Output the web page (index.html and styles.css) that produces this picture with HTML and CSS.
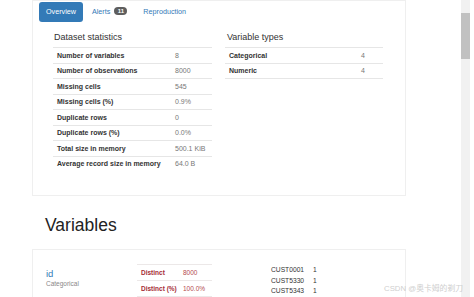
FILE: index.html
```html
<!DOCTYPE html>
<html lang="en">
<head>
  <meta charset="UTF-8">
  <meta name="viewport" content="width=device-width, initial-scale=1.0">
  <title>Profiling Report</title>
  <link rel="stylesheet" href="styles.css">
</head>
<body>

<div class="page">
  <div class="content">

    <!-- Overview -->
    <div class="panel overview">
      <ul class="tabs">
        <li><a class="active" href="#">Overview</a></li>
        <li><a href="#">Alerts <span class="badge">11</span></a></li>
        <li><a href="#">Reproduction</a></li>
      </ul>

      <div class="stats">
        <div class="col">
          <h2>Dataset statistics</h2>
          <table class="info-table ds">
            <tr><th>Number of variables</th><td>8</td></tr>
            <tr><th>Number of observations</th><td>8000</td></tr>
            <tr><th>Missing cells</th><td>545</td></tr>
            <tr><th>Missing cells (%)</th><td>0.9%</td></tr>
            <tr><th>Duplicate rows</th><td>0</td></tr>
            <tr><th>Duplicate rows (%)</th><td>0.0%</td></tr>
            <tr><th>Total size in memory</th><td>500.1 KiB</td></tr>
            <tr><th>Average record size in memory</th><td>64.0 B</td></tr>
          </table>
        </div>
        <div class="col">
          <h2 class="types-title">Variable types</h2>
          <table class="info-table vt">
            <tr><th>Categorical</th><td>4</td></tr>
            <tr><th>Numeric</th><td>4</td></tr>
          </table>
        </div>
      </div>
    </div>

    <h1 class="section-title">Variables</h1>

    <!-- Variable: id -->
    <div class="panel variable">
      <div class="var-name">
        <a href="#">id</a>
        <small>Categorical</small>
      </div>
      <table class="alert-table">
        <tr><th>Distinct</th><td>8000</td></tr>
        <tr><th>Distinct (%)</th><td>100.0%</td></tr>
      </table>
      <ul class="freq">
        <li><span>CUST0001</span><span>1</span></li>
        <li><span>CUST5330</span><span>1</span></li>
        <li><span>CUST5343</span><span>1</span></li>
      </ul>
    </div>

  </div>

  <div class="scrollbar"><div class="thumb"></div></div>
</div>

<div class="watermark">CSDN @奥卡姆的剃刀</div>

</body>
</html>
```

FILE: styles.css
```css
* {
  margin: 0;
  padding: 0;
  box-sizing: border-box;
}
body {
  font-family: "Liberation Sans", Arial, "Noto Sans CJK SC", sans-serif;
  background: #fff;
  color: #333;
  height: 297px;
  overflow: hidden;
  position: relative;
}
a {
  color: #337ab7;
  text-decoration: none;
}
.page {
  display: flex;
  height: 297px;
}
.content {
  width: 461px;
}
.scrollbar {
  width: 9px;
  background: #f1f1f1;
  padding-top: 13px;
}
.thumb {
  height: 46px;
  background: #c1c1c1;
}
.panel {
  margin-left: 32px;
  width: 374px;
  border: 1px solid #efefef;
}

/* tabs */
.tabs {
  list-style: none;
  display: flex;
  padding-left: 6px;
  margin-top: 1px;
}
.tabs li {
  margin-right: 2px;
}
.tabs a {
  display: block;
  padding: 0 7px;
  line-height: 20px;
  font-size: 7.2px;
  border-radius: 3px;
}
.tabs a.active {
  background: #337ab7;
  color: #fff;
}
.badge {
  display: inline-block;
  vertical-align: middle;
  margin-left: 2px;
  margin-top: -2px;
  padding: 0 3px;
  min-width: 13px;
  line-height: 8px;
  border-radius: 5px;
  background: #5e5e5e;
  color: #fff;
  font-size: 6px;
  font-weight: bold;
  text-align: center;
}

/* overview stats */
.stats {
  display: grid;
  grid-template-columns: 159px 158px;
  column-gap: 13px;
  padding: 0 22px 24px 20px;
}
.stats h2 {
  font-size: 9px;
  font-weight: normal;
  line-height: 11px;
  margin: 9.5px 0 4.5px 1px;
  color: #333;
}
.stats h2.types-title {
  margin-left: 2px;
}
.info-table {
  width: 100%;
  border-collapse: collapse;
  table-layout: fixed;
  font-size: 7px;
}
.info-table th,
.info-table td {
  text-align: left;
  padding: 2.5px 4px 2.5px 4px;
  line-height: 9.5px;
  border-top: 1px solid #e6e6e6;
  white-space: nowrap;
}
.info-table th {
  font-weight: bold;
  color: #333;
}
.info-table td {
  color: #777;
}
.info-table tr:last-child th,
.info-table tr:last-child td {
  border-bottom: 1px solid #e6e6e6;
}
.ds tr:last-child th,
.ds tr:last-child td {
  border-bottom: none;
}
.ds th { width: 118px; }
.vt th { width: 132px; }

/* variables */
.section-title {
  font-size: 17.5px;
  font-weight: normal;
  line-height: 20px;
  color: #222;
  margin: 19px 0 14px 45px;
}
.variable {
  display: grid;
  grid-template-columns: 91px 75px 1fr;
  padding: 14px 0 10px 13px;
  height: 60px;
}
.var-name {
  padding-top: 3.5px;
}
.var-name a {
  display: block;
  font-size: 9.5px;
  line-height: 11px;
}
.var-name small {
  display: block;
  font-size: 6.5px;
  line-height: 8px;
  color: #888;
  margin-top: 1px;
}
.alert-table {
  width: 75px;
  border-collapse: collapse;
  table-layout: fixed;
  font-size: 6.5px;
  align-self: start;
}
.alert-table th,
.alert-table td {
  text-align: left;
  padding: 3px 0 3px 4px;
  line-height: 9px;
  border-top: 1px solid #ece8e8;
  white-space: nowrap;
}
.alert-table tr:last-child th,
.alert-table tr:last-child td {
  border-bottom: 1px solid #ece8e8;
}
.alert-table th {
  width: 42px;
  color: #a52c35;
  font-weight: bold;
}
.alert-table td {
  color: #b44a4f;
}
.freq {
  list-style: none;
  padding-left: 59px;
  margin-top: 1px;
  font-size: 6.7px;
  color: #333;
}
.freq li {
  line-height: 10.5px;
}
.freq li span:first-child {
  display: inline-block;
  width: 42px;
}

.watermark {
  position: absolute;
  right: 11px;
  top: 284px;
  font-size: 7.8px;
  line-height: 10px;
  color: #cfcfcf;
}
```
